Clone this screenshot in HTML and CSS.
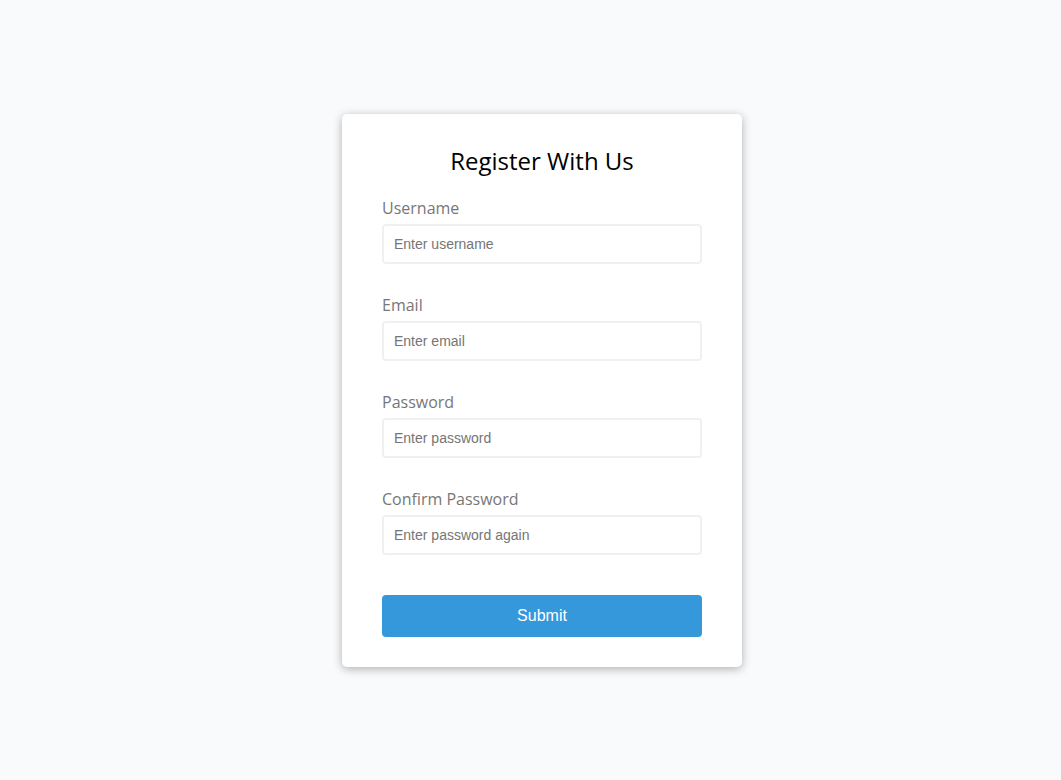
FILE: index.html
```html
<!DOCTYPE html>
<html>
 <head>
  <meta charset="UTF-8">
  <title>Register With Us</title>
  <link rel="stylesheet" href="styles.css">
 </head>
 <body>
  <div class="container">
   <form class="form" id="form">
    <h2>Register With Us</h2>
    <div class="form-control">
     <label for="username">Username</label>
     <input type="text" id="username" placeholder="Enter username">
    </div>
    <div class="form-control">
     <label for="email">Email</label>
     <input type="text" id="email" placeholder="Enter email">
    </div>
    <div class="form-control">
     <label for="password">Password</label>
     <input type="password" id="password" placeholder="Enter password">
    </div>
    <div class="form-control">
     <label for="password2">Confirm Password</label>
     <input type="password" id="password2" placeholder="Enter password again">
    </div>
    <button type="submit">Submit</button>
   </form>
  </div>
 </body>
</html>
```

FILE: styles.css
```css
* {
 box-sizing: border-box;
}

body {
 background-color: #f9fafb;
 font-family: "Open Sans", "Liberation Sans", sans-serif;
 display: flex;
 align-items: center;
 justify-content: center;
 min-height: 100vh;
 margin: 0;
 padding-left: 23px;
}

.container {
 background-color: #fff;
 border-radius: 5px;
 box-shadow: 0 2px 10px rgba(0, 0, 0, 0.3);
 width: 400px;
}

.form {
 padding: 30px 40px;
}

.form h2 {
 text-align: center;
 margin: 0 0 20px;
 font-size: 24px;
 font-weight: 500;
 color: #000;
}

.form-control {
 margin-bottom: 10px;
 padding-bottom: 20px;
 position: relative;
}

.form-control label {
 color: #777;
 display: block;
 margin-bottom: 5px;
 font-size: 16px;
}

.form-control input {
 border: 2px solid #f0f0f0;
 border-radius: 4px;
 display: block;
 width: 100%;
 padding: 10px;
 font-family: "Liberation Sans", Arial, sans-serif;
 font-size: 14px;
}

.form-control input:focus {
 outline: 0;
 border-color: #777;
}

.form button {
 cursor: pointer;
 background-color: #3498db;
 border: 2px solid #3498db;
 border-radius: 4px;
 color: #fff;
 display: block;
 font-family: "Liberation Sans", Arial, sans-serif;
 font-size: 16px;
 padding: 10px;
 margin-top: 20px;
 width: 100%;
}
```
